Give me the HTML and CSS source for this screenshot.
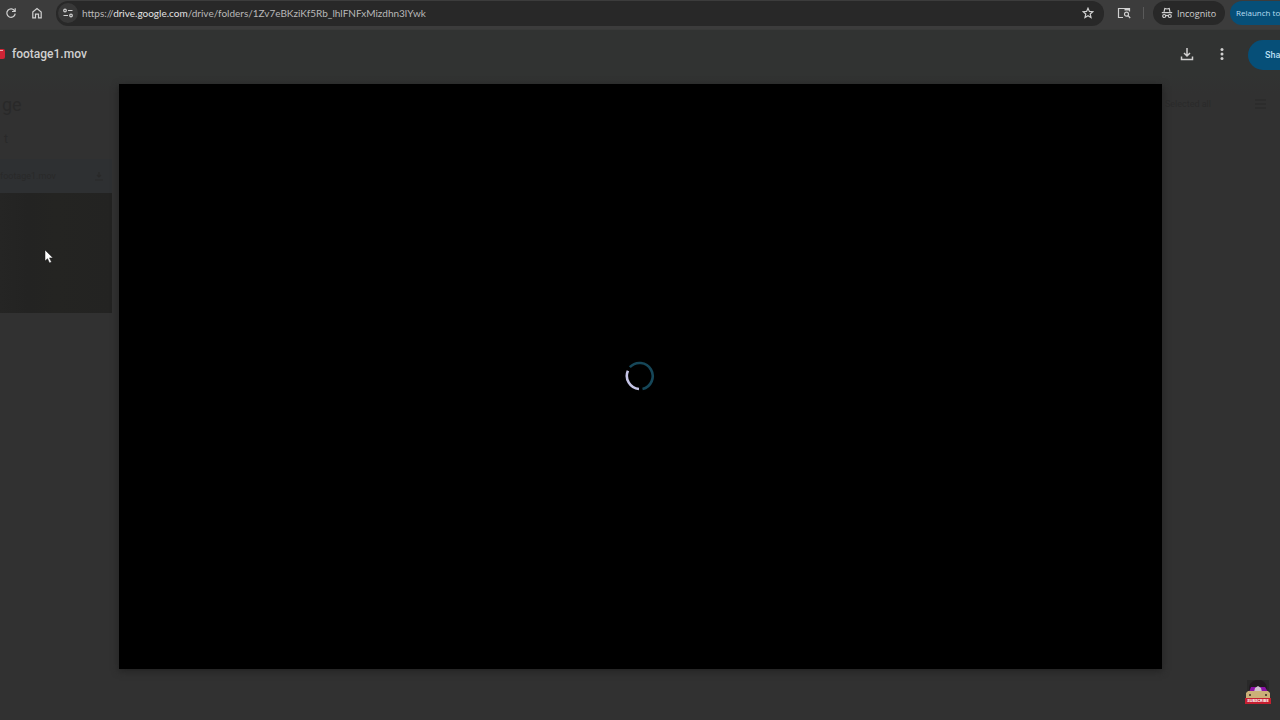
FILE: index.html
```html
<!DOCTYPE html>
<html lang="en">
<head>
<meta charset="utf-8">
<title>footage1.mov</title>
<link rel="stylesheet" href="styles.css">
</head>
<body>
<nav class="toolbar" aria-label="Browser">
  <button class="icon-btn" aria-label="Reload"><svg width="12" height="12" viewBox="0 0 12 12"><path d="M9.7 4.1A4.2 4.2 0 1 0 10.2 6.6M10.2 1.3v3.2H7" /></svg></button>
  <button class="icon-btn" aria-label="Home"><svg width="12" height="12" viewBox="0 0 12 12"><path d="M1.800 5L6 1.500 10.200 5v5.800H7.500V7.200h-3v3.600H1.800z"/></svg></button>
  <div class="address">
    <button class="site-btn" aria-label="Site information"><svg width="12" height="12" viewBox="0 0 12 12"><path d="M6 3.500h4.500M1.500 8.500H6"/><circle cx="3" cy="3.500" r="1.300"/><circle cx="9" cy="8.500" r="1.300"/></svg></button>
    <div class="url"><span>https://</span><b>drive.google.com</b><span>/drive/folders/1Zv7eBKziKf5Rb_lhlFNFxMizdhn3lYwk</span></div>
    <button class="icon-btn" aria-label="Bookmark"><svg width="12" height="12" viewBox="0 0 12 12"><path d="M6 1.200l1.400 3.200 3.500.300-2.700 2.300.800 3.500L6 8.700l-3 1.800.800-3.500L1.100 4.700l3.500-.300z"/></svg></button>
  </div>
  <button class="icon-btn search-tabs" aria-label="Search tabs"><svg width="14" height="12" viewBox="0 0 14 12"><path d="M6 10.500H1.500v-9h11v3"/><path d="M7.500 2.500h5" stroke-width="2"/><circle cx="9.500" cy="7.200" r="2"/><path d="M11 8.700l2.200 2.300"/></svg></button>
  <span class="divider"></span>
  <button class="incognito"><svg width="12" height="12" viewBox="0 0 12 12"><path d="M3 4.800L3.800 1.500l2.200.500 2.200-.500.800 3.300"/><path d="M.8 5.600h10.400M4.800 8.700q1.200-.800 2.400 0"/><circle cx="3.200" cy="9" r="1.500"/><circle cx="8.800" cy="9" r="1.500"/></svg>Incognito</button>
  <button class="relaunch">Relaunch to</button>
</nav>
<main class="viewer">
  <div class="folder" aria-hidden="true">
    <div class="folder-head"><span class="folder-title">ge</span><span class="folder-status">Selected all</span><svg width="11" height="12" viewBox="0 0 11 12"><path d="M0 2h11M0 6h11M0 10h11"/></svg></div>
    <div class="filter">t</div>
    <div class="card-name"><span>footage1.mov</span><svg width="10" height="10" viewBox="0 0 10 10"><path d="M5 1v5M3 4l2 2 2-2M1 9h8"/></svg></div>
    <div class="thumb"></div>
  </div>
  <header class="file-bar">
    <svg class="file-icon" width="5" height="12" viewBox="0 0 5 12"><path d="M0 1h3q2 0 2 2v6q0 2-2 2H0z" fill="#cf2435"/><path d="M0 2h3v1H0z" fill="#efabb1"/></svg>
    <h1 class="file-name">footage1.mov</h1>
    <button class="icon-btn download" aria-label="Download"><svg width="14" height="14" viewBox="0 0 14 14"><path d="M7 1v8M4 6l3 3 3-3M1.500 9.500v3h11v-3"/></svg></button>
    <button class="icon-btn more" aria-label="More actions"><svg width="4" height="14" viewBox="0 0 4 14"><g class="solid"><circle cx="2" cy="2.500" r="1.500"/><circle cx="2" cy="7" r="1.500"/><circle cx="2" cy="11.500" r="1.500"/></g></svg></button>
    <button class="share" aria-label="Share">Sha</button>
  </header>
  <section class="stage" aria-label="Video loading">
    <svg width="32" height="32" viewBox="1 1 32 32"><path d="M5.800 7.200A13.200 13.200 0 1 1 18.500 29" stroke="#164759" stroke-width="2.600"/><path d="M3.900 10.700A13.200 13.200 0 0 0 15 29" stroke="#c5c4e6" stroke-width="2.600"/></svg>
  </section>
  <svg class="pointer" width="10" height="15" viewBox="0 0 10 15"><path d="M1 1v11l2.500-2.300L5.500 14l2-.900-2-4.200H9z" fill="#fff" stroke="#151515" stroke-width=".5"/></svg>
  <div class="badge">
    <svg width="26" height="20" viewBox="0 0 26 20"><path d="M2 2h22v16H2z" fill="#292929"/><path d="M4 13Q3 4 11 2h5q7 3 6 11z" fill="#211b20"/><path d="M4 14l2-5h14l3 5z" fill="#8c13a8"/><path d="M9 14l1-4 3-2 3 2 1 4z" fill="#d0c2ce"/><path d="M1 20v-5l2-2h20l2 2v5z" fill="#cbb078"/><circle cx="5" cy="17" r="1" fill="#332b20"/><circle cx="21" cy="17" r="1" fill="#332b20"/></svg>
    <span>SUBSCRIBE</span>
  </div>
</main>
</body>
</html>
```
FILE: styles.css
```css
* { box-sizing: border-box; }
body {
  margin: 0;
  height: 100vh;
  display: flex;
  flex-direction: column;
  overflow: hidden;
  background: #313131;
  color: #d0d0d0;
  font-family: "Open Sans", sans-serif;
}
button {
  border: 0;
  padding: 0;
  background: none;
  color: inherit;
  font: inherit;
  white-space: nowrap;
}
svg { display: block; flex: none; fill: none; stroke: currentColor; stroke-width: 1.2; }
.solid { fill: currentColor; }
.toolbar {
  display: flex;
  align-items: center;
  height: 30px;
  padding: 0 0 3px 5px;
  background: #3c3c3c;
  border-bottom: 1px solid #393a39;
  font-size: 10px;
}
.icon-btn { flex: none; margin-right: 14px; }
.address {
  flex: 1;
  min-width: 0;
  height: 25px;
  margin-left: -1px;
  padding-left: 2px;
  display: flex;
  align-items: center;
  border-radius: 12px;
  background: #282828;
}
.address .icon-btn { margin-right: 10px; }
.site-btn {
  width: 20px;
  height: 20px;
  display: grid;
  place-items: center;
  border-radius: 10px;
  background: #383838;
}
.url { flex: 1; margin-left: 4px; color: #b9b9b9; font-family: Lato, sans-serif; font-size: 10px; white-space: nowrap; }
.url b { font-weight: 400; color: #e4e4e4; }
.search-tabs { margin: 0 12px 0 13px; }
.divider { width: 1px; height: 12px; background: #5a5a5a; }
.incognito {
  display: flex;
  align-items: center;
  gap: 4px;
  width: 72px;
  height: 24px;
  margin: 0 5px 0 9px;
  padding-left: 8px;
  border-radius: 12px;
  background: #282828;
  font-size: 9px;
}
.relaunch {
  width: 50px;
  height: 24px;
  padding-left: 6px;
  text-align: left;
  border-radius: 12px 0 0 12px;
  background: #064f78;
  color: #b9dff2;
  font: 8px/24px "Open Sans", sans-serif;
}
.viewer {
  position: relative;
  flex: 1;
  min-height: 0;
  display: flex;
  flex-direction: column;
  padding-bottom: 51px;
  background: linear-gradient(#313332 0, #313332 44px, #313131 64px);
}
.file-bar {
  position: relative;
  display: flex;
  align-items: center;
  height: 54px;
  padding-bottom: 7px;
}
.file-name {
  flex: 1;
  margin: 0 0 0 7px;
  font: 500 12px/16px Roboto, sans-serif;
}
.download { margin-right: 26px; }
.more { margin-right: 24px; }
.file-bar svg { stroke-width: 1.5; }
.file-bar .solid, .file-icon { stroke: none; }
.share {
  width: 32px;
  height: 30px;
  margin-top: 3px;
  padding-left: 17px;
  text-align: left;
  border-radius: 15px 0 0 15px;
  background: #064f78;
  color: #b9dff2;
  font: 500 9px/30px Roboto, sans-serif;
}
.stage {
  position: relative;
  flex: 1;
  margin: 0 118px 0 119px;
  display: grid;
  place-items: center;
  background: #000;
  box-shadow: 0 2px 7px #222;
}
.folder {
  position: absolute;
  inset: 59px 0 auto;
  color: #292929;
  font-family: Roboto, sans-serif;
}
.folder-head { display: flex; align-items: center; height: 30px; padding-right: 14px; }
.folder-title { flex: 1; padding-left: 2px; font-size: 18px; }
.folder-status { margin-right: 44px; font-size: 9px; color: #2a2a2a; }
.filter { height: 40px; padding: 13px 0 0 4px; font-size: 12px; }
.card-name {
  display: flex;
  align-items: center;
  justify-content: space-between;
  width: 112px;
  height: 34px;
  padding-right: 8px;
  background: #2e3032;
  font-size: 9px;
}
.thumb { width: 112px; height: 120px; background: linear-gradient(90deg, #252524, #232322 25%, #242422 50%, #232322); }
.pointer { position: absolute; left: 44px; top: 219px; }
.badge {
  position: absolute;
  right: 9px;
  bottom: 16px;
  width: 26px;
}
.badge svg { stroke: none; }
.badge span {
  display: block;
  background: #c51f30;
  color: #fff;
  font: 700 4px/6px Roboto, sans-serif;
  text-align: center;
}
```
